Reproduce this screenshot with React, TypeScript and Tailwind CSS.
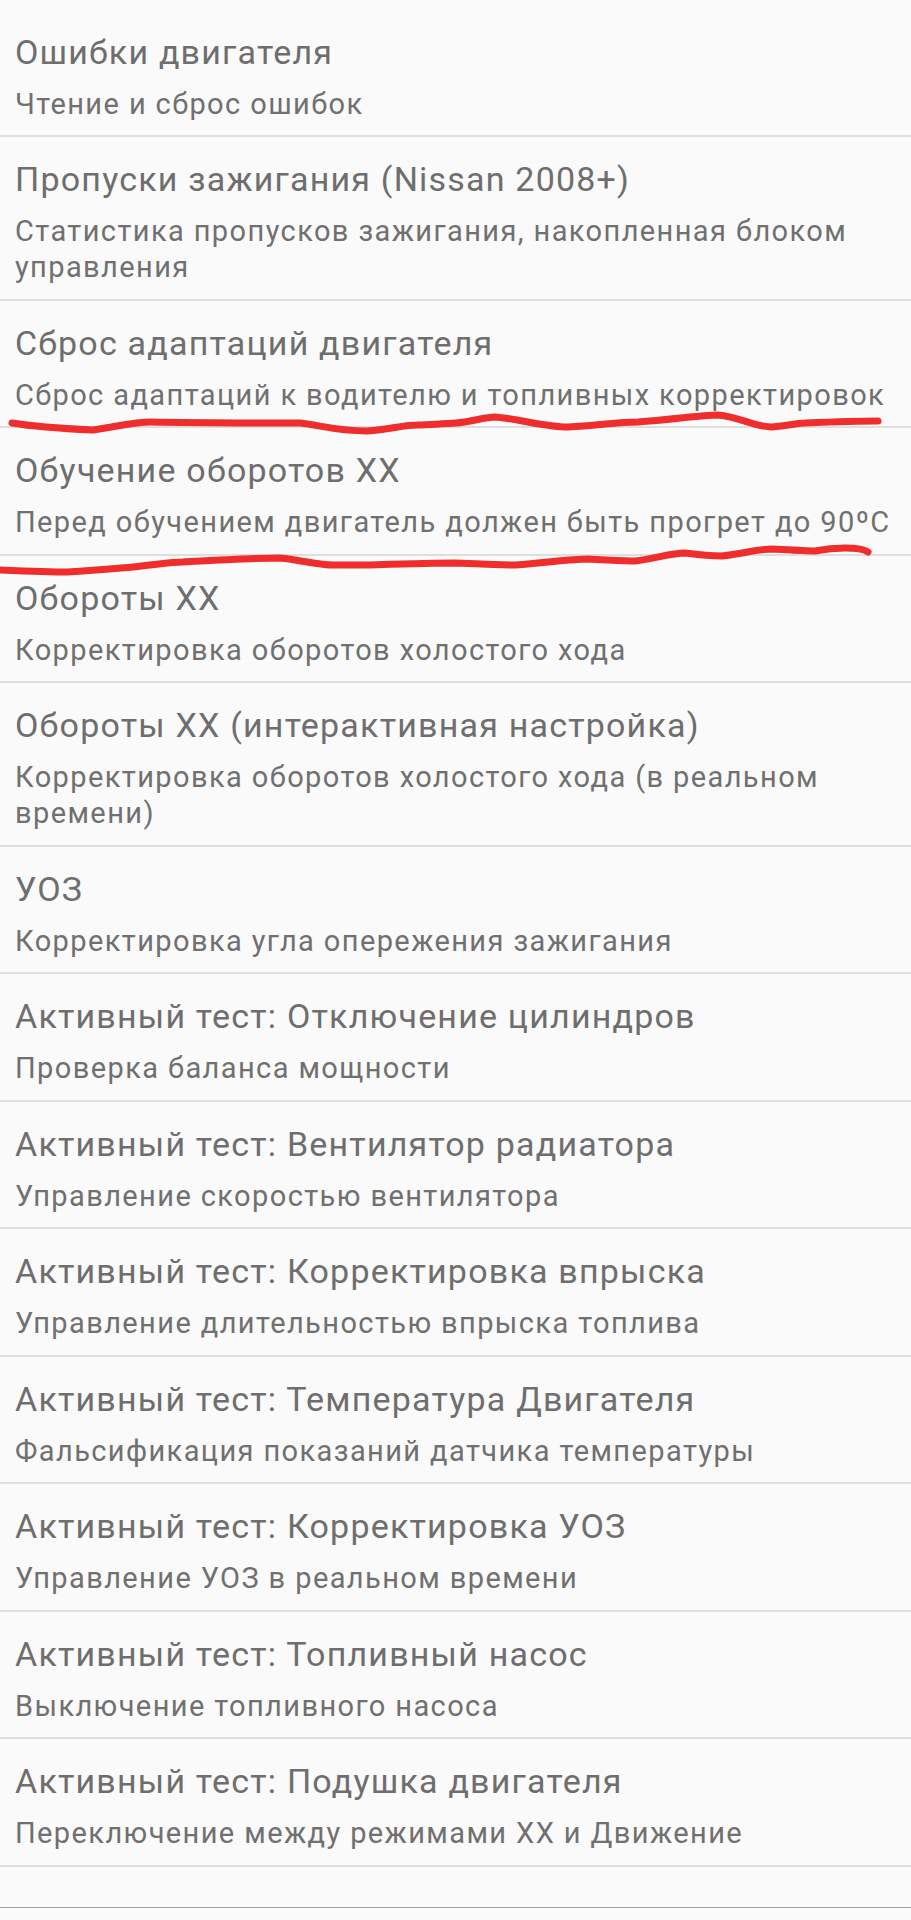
import React from 'react';

type Item = { title: string; subtitle: string };

const items: Item[] = [
  { title: 'Ошибки двигателя', subtitle: 'Чтение и сброс ошибок' },
  { title: 'Пропуски зажигания (Nissan 2008+)', subtitle: 'Статистика пропусков зажигания, накопленная блоком управления' },
  { title: 'Сброс адаптаций двигателя', subtitle: 'Сброс адаптаций к водителю и топливных корректировок' },
  { title: 'Обучение оборотов ХХ', subtitle: 'Перед обучением двигатель должен быть прогрет до 90ºC' },
  { title: 'Обороты ХХ', subtitle: 'Корректировка оборотов холостого хода' },
  { title: 'Обороты ХХ (интерактивная настройка)', subtitle: 'Корректировка оборотов холостого хода (в реальном времени)' },
  { title: 'УОЗ', subtitle: 'Корректировка угла опережения зажигания' },
  { title: 'Активный тест: Отключение цилиндров', subtitle: 'Проверка баланса мощности' },
  { title: 'Активный тест: Вентилятор радиатора', subtitle: 'Управление скоростью вентилятора' },
  { title: 'Активный тест: Корректировка впрыска', subtitle: 'Управление длительностью впрыска топлива' },
  { title: 'Активный тест: Температура Двигателя', subtitle: 'Фальсификация показаний датчика температуры' },
  { title: 'Активный тест: Корректировка УОЗ', subtitle: 'Управление УОЗ в реальном времени' },
  { title: 'Активный тест: Топливный насос', subtitle: 'Выключение топливного насоса' },
  { title: 'Активный тест: Подушка двигателя', subtitle: 'Переключение между режимами ХХ и Движение' },
];

function Row({ title, subtitle }: Item) {
  return (
    <div className="flex flex-col pl-[15px] pr-0 pt-[20px] pb-[13.5px] border-b-2 border-[#dedede]">
      <div className="text-[34px] leading-[44px] tracking-[1.2px] text-[#6e6e6e]">{title}</div>
      <div className="mt-[12px] text-[29px] leading-[36px] tracking-[1.4px] text-[#707070]">{subtitle}</div>
    </div>
  );
}

export default function App() {
  return (
    <div
      className="relative w-[911px] min-h-[1920px] bg-[#fafafa] flex flex-col"
      style={{ fontFamily: 'Roboto, "Noto Sans", sans-serif' }}
    >
      <div className="pt-[9.5px] flex flex-col">
        {items.map((item) => (
          <Row key={item.title} {...item} />
        ))}
      </div>
      <div className="h-[40px]" />
      <div className="border-t border-[#9e9e9e] flex-1" />

      {/* hand-drawn red underlines */}
      <svg
        className="absolute left-0 top-0 pointer-events-none"
        width="911"
        height="1920"
        viewBox="0 0 911 1920"
      >
        <path
          d="M12 423 C30 426 50 428 93 430 C120 426 135 422 150 422 C200 423 260 423 300 423 C320 425 335 431 367 431 C390 429 405 425 417 425 C435 424 445 424 456 423 C470 422 485 417 495 417 C520 419 545 427 568 427 C600 425 620 422 638 422 C670 420 700 415 718 415 C740 417 755 427 772 427 C790 425 800 423 805 423 C830 422 860 421 878 421"
          fill="none"
          stroke="#ef2d2d"
          strokeWidth="7"
          strokeLinecap="round"
          strokeLinejoin="round"
        />
        <path
          d="M0 570 C25 571 50 572 67 572 C100 570 120 568 133 567 C155 565 170 562 183 562 C220 560 255 558 280 558 C300 560 320 565 333 565 C350 565 360 565 367 565 C400 564 430 563 456 563 C480 564 500 565 515 565 C545 563 570 559 588 559 C610 560 625 561 635 561 C655 559 670 553 685 553 C700 555 712 556 722 556 C745 553 760 549 772 549 C790 550 805 551 815 551 C825 549 832 548 845 548 C855 548 864 549 868 552"
          fill="none"
          stroke="#ef2d2d"
          strokeWidth="7"
          strokeLinecap="round"
          strokeLinejoin="round"
        />
      </svg>
    </div>
  );
}
